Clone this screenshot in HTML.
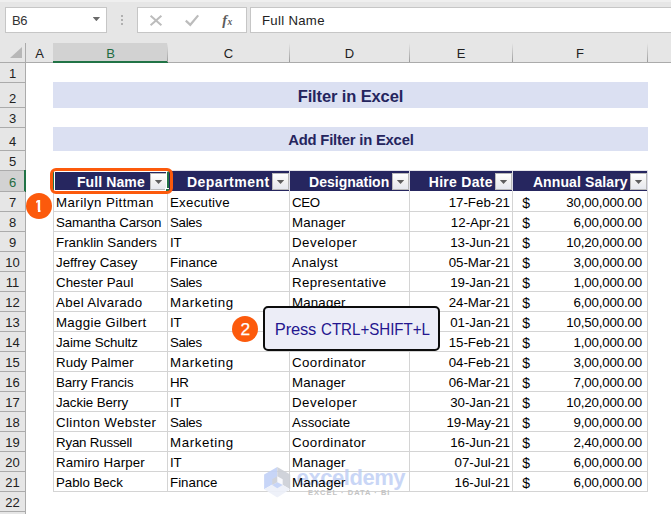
<!DOCTYPE html><html><head><meta charset="utf-8"><title>Filter in Excel</title><style>
*{box-sizing:border-box;margin:0;padding:0}
html,body{width:671px;height:514px;overflow:hidden;background:#fff}
body{position:relative;font-family:"Liberation Sans",sans-serif;color:#000;font-size:13px}
.abs,.abs>*{position:absolute}
div{position:absolute;white-space:nowrap}
.top{left:0;top:0;width:671px;height:43px;background:#e6e6e6}
.box{background:#fff;border:1px solid #c6c6c6}
.ch{top:43px;height:19px;background:#e6e6e6;text-align:center;line-height:22px;font-size:13px;color:#222}
.rh{left:0;width:25px;background:#e6e6e6;text-align:center;font-size:13px;color:#222}
.t{font-size:13.3px;line-height:20px;height:20px;color:#000}
.th{color:#fff;font-weight:700;font-size:14px;line-height:20px;height:20px;top:172.2px}
.fb{width:17px;height:17px;top:173px;border:1px solid #b9b9b9;background:linear-gradient(#fff,#f2f2f2 50%,#e6e8ef);}
.fb:after{content:"";position:absolute;left:3.85px;top:5.9px;width:7.4px;height:4.2px;background:#5e5e5e;clip-path:polygon(0 0,100% 0,50% 100%)}
.hl{height:1px;background:#d4d4d4}
.vl{width:1px;background:#d4d4d4}
.circ{width:26.2px;height:26.2px;border-radius:50%;background:#fc5a0c;color:#fff;text-align:center;font-size:17px;line-height:26px}
</style></head><body>
<div class="top"></div>
<div style="left:0;top:0;width:671px;height:2px;background:#efefef"></div>
<div class="box" style="left:5px;top:7px;width:102px;height:26px"></div>
<div style="left:12px;top:7px;height:26px;line-height:27px;font-size:13px;color:#333;letter-spacing:-0.5px">B6</div>
<div style="left:92.7px;top:17px;width:7.4px;height:4.2px;background:#6a6a6a;clip-path:polygon(0 0,100% 0,50% 100%)"></div>
<div style="left:121px;top:15px;width:2px;height:2px;background:#b0b0b0"></div>
<div style="left:121px;top:19px;width:2px;height:2px;background:#b0b0b0"></div>
<div style="left:121px;top:23px;width:2px;height:2px;background:#b0b0b0"></div>
<div class="box" style="left:137px;top:7px;width:110px;height:26px"></div>
<svg style="position:absolute;left:137px;top:7px" width="110" height="26" viewBox="0 0 110 26"><path d="M13.6 8.8 L24.4 18.2 M24.4 8.8 L13.6 18.2" stroke="#bcbcbc" stroke-width="2" fill="none"/><path d="M48.8 13.6 L53.3 17.8 L61.2 8.4" stroke="#bcbcbc" stroke-width="2.2" fill="none"/><text x="85.3" y="17.6" font-family="Liberation Serif,serif" font-style="italic" font-weight="700" font-size="14.5" fill="#5c5c5c">f</text><text x="90.6" y="18.4" font-family="Liberation Serif,serif" font-style="italic" font-weight="700" font-size="9.5" fill="#5c5c5c">x</text></svg>
<div class="box" style="left:250px;top:7px;width:430px;height:26px"></div>
<div style="left:262px;top:7px;height:26px;line-height:27px;font-size:13.2px;color:#222;letter-spacing:0.3px">Full Name</div>
<div style="left:0;top:43px;width:671px;height:20px;background:#e6e6e6"></div>
<div style="left:0;top:62px;width:671px;height:1px;background:#ababab"></div>
<svg style="position:absolute;left:0;top:43px" width="26" height="20"><path d="M22 4 L22 15 L10 15 Z" fill="#b7b7b7"/></svg>
<div style="left:25px;top:43px;width:1px;height:471px;background:#ababab"></div>
<div class="ch" style="left:26px;width:27px">A</div>
<div style="left:53px;top:43px;width:1px;height:19px;background:linear-gradient(#e6e6e6,#9c9c9c)"></div>
<div class="ch" style="left:53px;width:115px;background:#d2d2d2;color:#1e6b41">B</div>
<div style="left:53px;top:61px;width:115px;height:2px;background:#217346"></div>
<div style="left:167px;top:43px;width:1px;height:19px;background:linear-gradient(#e6e6e6,#9c9c9c)"></div>
<div class="ch" style="left:168px;width:121px">C</div>
<div style="left:289px;top:43px;width:1px;height:19px;background:linear-gradient(#e6e6e6,#9c9c9c)"></div>
<div class="ch" style="left:290px;width:119px">D</div>
<div style="left:409px;top:43px;width:1px;height:19px;background:linear-gradient(#e6e6e6,#9c9c9c)"></div>
<div class="ch" style="left:410px;width:102px">E</div>
<div style="left:512px;top:43px;width:1px;height:19px;background:linear-gradient(#e6e6e6,#9c9c9c)"></div>
<div class="ch" style="left:513px;width:134px">F</div>
<div style="left:647px;top:43px;width:1px;height:19px;background:linear-gradient(#e6e6e6,#9c9c9c)"></div>
<div style="left:0;top:63px;width:25px;height:451px;background:#e6e6e6"></div>
<div class="rh" style="top:63px;height:19px;line-height:21px;background:none">1</div>
<div style="left:0;top:82px;width:25px;height:1px;background:#ababab"></div>
<div class="rh" style="top:88px;height:19px;line-height:21px;background:none">2</div>
<div style="left:0;top:107px;width:25px;height:1px;background:#ababab"></div>
<div class="rh" style="top:108px;height:19px;line-height:21px;background:none">3</div>
<div style="left:0;top:127px;width:25px;height:1px;background:#ababab"></div>
<div class="rh" style="top:131px;height:19px;line-height:21px;background:none">4</div>
<div style="left:0;top:150px;width:25px;height:1px;background:#ababab"></div>
<div class="rh" style="top:151px;height:19px;line-height:21px;background:none">5</div>
<div style="left:0;top:170px;width:25px;height:1px;background:#ababab"></div>
<div style="left:0;top:171px;width:25px;height:20px;background:#d2d2d2"></div>
<div style="left:24px;top:170px;width:2px;height:22px;background:#217346"></div>
<div class="rh" style="top:172px;height:19px;line-height:21px;background:none;color:#1e6b41">6</div>
<div style="left:0;top:191px;width:25px;height:1px;background:#ababab"></div>
<div class="rh" style="top:192px;height:19px;line-height:21px;background:none">7</div>
<div style="left:0;top:211px;width:25px;height:1px;background:#ababab"></div>
<div class="rh" style="top:212px;height:19px;line-height:21px;background:none">8</div>
<div style="left:0;top:231px;width:25px;height:1px;background:#ababab"></div>
<div class="rh" style="top:232px;height:19px;line-height:21px;background:none">9</div>
<div style="left:0;top:251px;width:25px;height:1px;background:#ababab"></div>
<div class="rh" style="top:252px;height:19px;line-height:21px;background:none">10</div>
<div style="left:0;top:271px;width:25px;height:1px;background:#ababab"></div>
<div class="rh" style="top:272px;height:19px;line-height:21px;background:none">11</div>
<div style="left:0;top:291px;width:25px;height:1px;background:#ababab"></div>
<div class="rh" style="top:292px;height:19px;line-height:21px;background:none">12</div>
<div style="left:0;top:311px;width:25px;height:1px;background:#ababab"></div>
<div class="rh" style="top:312px;height:19px;line-height:21px;background:none">13</div>
<div style="left:0;top:331px;width:25px;height:1px;background:#ababab"></div>
<div class="rh" style="top:332px;height:19px;line-height:21px;background:none">14</div>
<div style="left:0;top:351px;width:25px;height:1px;background:#ababab"></div>
<div class="rh" style="top:352px;height:19px;line-height:21px;background:none">15</div>
<div style="left:0;top:371px;width:25px;height:1px;background:#ababab"></div>
<div class="rh" style="top:372px;height:19px;line-height:21px;background:none">16</div>
<div style="left:0;top:391px;width:25px;height:1px;background:#ababab"></div>
<div class="rh" style="top:392px;height:19px;line-height:21px;background:none">17</div>
<div style="left:0;top:411px;width:25px;height:1px;background:#ababab"></div>
<div class="rh" style="top:412px;height:19px;line-height:21px;background:none">18</div>
<div style="left:0;top:431px;width:25px;height:1px;background:#ababab"></div>
<div class="rh" style="top:432px;height:19px;line-height:21px;background:none">19</div>
<div style="left:0;top:451px;width:25px;height:1px;background:#ababab"></div>
<div class="rh" style="top:452px;height:19px;line-height:21px;background:none">20</div>
<div style="left:0;top:471px;width:25px;height:1px;background:#ababab"></div>
<div class="rh" style="top:472px;height:19px;line-height:21px;background:none">21</div>
<div style="left:0;top:491px;width:25px;height:1px;background:#ababab"></div>
<div class="rh" style="top:492px;height:19px;line-height:21px;background:none">22</div>
<div style="left:0;top:511px;width:25px;height:1px;background:#ababab"></div>
<div style="left:53px;top:82px;width:595px;height:26px;background:#dbe0f2"></div>
<div style="left:297.7px;top:82px;height:26px;line-height:29px;font-weight:700;font-size:16.5px;color:#25255e;letter-spacing:-0.121px">Filter in Excel</div>
<div style="left:53px;top:127px;width:595px;height:24px;background:#dbe0f2"></div>
<div style="left:288.3px;top:127px;height:24px;line-height:26px;font-weight:700;font-size:14.8px;color:#25255e;letter-spacing:-0.2px">Add Filter in Excel</div>
<div style="left:53px;width:114px;top:171px;height:20px;background:#26265f"></div>
<div class="th" style="left:76.9px;letter-spacing:0.112px">Full Name</div>
<div class="fb" style="left:150px"></div>
<div style="left:167px;width:122px;top:171px;height:20px;background:#26265f"></div>
<div class="th" style="left:186.9px;letter-spacing:0.5px">Department</div>
<div class="fb" style="left:272px"></div>
<div style="left:289px;width:120px;top:171px;height:20px;background:#26265f"></div>
<div class="th" style="left:309.09999999999997px;letter-spacing:-0.002px">Designation</div>
<div class="fb" style="left:392px"></div>
<div style="left:409px;width:103px;top:171px;height:20px;background:#26265f"></div>
<div class="th" style="left:428.79999999999995px;letter-spacing:0.279px">Hire Date</div>
<div class="fb" style="left:495px"></div>
<div style="left:512px;width:135px;top:171px;height:20px;background:#26265f"></div>
<div class="th" style="left:532.9px;letter-spacing:0.102px">Annual Salary</div>
<div class="fb" style="left:630px"></div>
<div style="left:167px;top:170px;width:1px;height:21px;background:#dcdce6"></div>
<div style="left:289px;top:170px;width:1px;height:21px;background:#dcdce6"></div>
<div style="left:409px;top:170px;width:1px;height:21px;background:#dcdce6"></div>
<div style="left:512px;top:170px;width:1px;height:21px;background:#dcdce6"></div>
<div style="left:647px;top:170px;width:1px;height:21px;background:#dcdce6"></div>
<div style="left:53px;top:170px;width:595px;height:1px;background:#e4e4ea"></div>
<div class="hl" style="left:53px;top:211px;width:595px"></div>
<div class="hl" style="left:53px;top:231px;width:595px"></div>
<div class="hl" style="left:53px;top:251px;width:595px"></div>
<div class="hl" style="left:53px;top:271px;width:595px"></div>
<div class="hl" style="left:53px;top:291px;width:595px"></div>
<div class="hl" style="left:53px;top:311px;width:595px"></div>
<div class="hl" style="left:53px;top:331px;width:595px"></div>
<div class="hl" style="left:53px;top:351px;width:595px"></div>
<div class="hl" style="left:53px;top:371px;width:595px"></div>
<div class="hl" style="left:53px;top:391px;width:595px"></div>
<div class="hl" style="left:53px;top:411px;width:595px"></div>
<div class="hl" style="left:53px;top:431px;width:595px"></div>
<div class="hl" style="left:53px;top:451px;width:595px"></div>
<div class="hl" style="left:53px;top:471px;width:595px"></div>
<div class="hl" style="left:53px;top:491px;width:595px"></div>
<div class="vl" style="left:53px;top:191px;height:301px"></div>
<div class="vl" style="left:167px;top:191px;height:301px"></div>
<div class="vl" style="left:289px;top:191px;height:301px"></div>
<div class="vl" style="left:409px;top:191px;height:301px"></div>
<div class="vl" style="left:512px;top:191px;height:301px"></div>
<div class="vl" style="left:647px;top:191px;height:301px"></div>
<svg style="position:absolute;left:262px;top:464px" width="32" height="36" viewBox="0 0 32 36"><g opacity="0.9"><path d="M15.25 3.1 L2.1 10.6 L2.1 25.2 L15.25 17.8 Z" fill="#c2d1f7"/><path d="M15.25 3.1 L28.2 10.6 L28.2 25.2 L15.25 17.8 Z" fill="#cccfd6"/><path d="M2.1 25.2 L15.25 17.8 L28.2 25.2 L15.25 33.5 Z" fill="#edf0f9"/><path d="M15.25 12.25 L10.25 15.2 L10.25 21 L15.4 18.3 Z" fill="#cccfd6"/><path d="M15.25 12.25 L20.7 15.2 L20.7 21 L15.4 18.3 Z" fill="#f8f9fd"/><path d="M10.25 21 L15.4 18.3 L20.7 21 L15.25 24.3 Z" fill="#c2d1f7"/></g></svg>
<div style="left:296.6px;top:464.6px;font-size:22px;font-weight:700;color:#bccdf5;opacity:.8;letter-spacing:-0.45px;line-height:26px">exceldemy</div>
<div style="left:308px;top:487.6px;font-size:7.5px;color:#c4c4c4;letter-spacing:1.02px;line-height:9px;font-weight:700">EXCEL · DATA · BI</div>
<div class="t" style="left:56px;top:193px;letter-spacing:0.42px;">Marilyn Pittman</div>
<div class="t" style="left:170px;top:193px;letter-spacing:0.243px;">Executive</div>
<div class="t" style="left:292px;top:193px;letter-spacing:-0.3px;">CEO</div>
<div class="t" style="left:410px;width:100px;text-align:right;top:193px">17-Feb-21</div>
<div class="t" style="left:522.2px;top:193px;font-size:14px">$</div>
<div class="t" style="left:513px;width:128.9px;text-align:right;top:193px;letter-spacing:-0.17px">30,00,000.00</div>
<div class="t" style="left:56px;top:213px;letter-spacing:-0.128px;">Samantha Carson</div>
<div class="t" style="left:170px;top:213px;letter-spacing:-0.3px;">Sales</div>
<div class="t" style="left:292px;top:213px;letter-spacing:0.169px;">Manager</div>
<div class="t" style="left:410px;width:100px;text-align:right;top:213px">12-Apr-21</div>
<div class="t" style="left:522.2px;top:213px;font-size:14px">$</div>
<div class="t" style="left:513px;width:128.9px;text-align:right;top:213px;letter-spacing:-0.17px">6,00,000.00</div>
<div class="t" style="left:56px;top:233px;letter-spacing:0.032px;">Franklin Sanders</div>
<div class="t" style="left:170px;top:233px;letter-spacing:-0.3px;">IT</div>
<div class="t" style="left:292px;top:233px;letter-spacing:0.511px;">Developer</div>
<div class="t" style="left:410px;width:100px;text-align:right;top:233px">13-Jun-21</div>
<div class="t" style="left:522.2px;top:233px;font-size:14px">$</div>
<div class="t" style="left:513px;width:128.9px;text-align:right;top:233px;letter-spacing:-0.17px">10,20,000.00</div>
<div class="t" style="left:56px;top:253px;letter-spacing:0.036px;">Jeffrey Casey</div>
<div class="t" style="left:170px;top:253px;letter-spacing:0.015px;">Finance</div>
<div class="t" style="left:292px;top:253px;letter-spacing:0.365px;">Analyst</div>
<div class="t" style="left:410px;width:100px;text-align:right;top:253px">05-Mar-21</div>
<div class="t" style="left:522.2px;top:253px;font-size:14px">$</div>
<div class="t" style="left:513px;width:128.9px;text-align:right;top:253px;letter-spacing:-0.17px">3,00,000.00</div>
<div class="t" style="left:56px;top:273px;letter-spacing:0.048px;">Chester Paul</div>
<div class="t" style="left:170px;top:273px;letter-spacing:-0.3px;">Sales</div>
<div class="t" style="left:292px;top:273px;letter-spacing:0.366px;">Representative</div>
<div class="t" style="left:410px;width:100px;text-align:right;top:273px">19-Jan-21</div>
<div class="t" style="left:522.2px;top:273px;font-size:14px">$</div>
<div class="t" style="left:513px;width:128.9px;text-align:right;top:273px;letter-spacing:-0.17px">1,00,000.00</div>
<div class="t" style="left:56px;top:293px;letter-spacing:0.336px;">Abel Alvarado</div>
<div class="t" style="left:170px;top:293px;letter-spacing:0.589px;">Marketing</div>
<div class="t" style="left:292px;top:293px;letter-spacing:0.169px;">Manager</div>
<div class="t" style="left:410px;width:100px;text-align:right;top:293px">24-Mar-21</div>
<div class="t" style="left:522.2px;top:293px;font-size:14px">$</div>
<div class="t" style="left:513px;width:128.9px;text-align:right;top:293px;letter-spacing:-0.17px">6,00,000.00</div>
<div class="t" style="left:56px;top:313px;letter-spacing:0.287px;">Maggie Gilbert</div>
<div class="t" style="left:170px;top:313px;letter-spacing:-0.3px;">IT</div>
<div class="t" style="left:292px;top:313px;letter-spacing:0.511px;">Developer</div>
<div class="t" style="left:410px;width:100px;text-align:right;top:313px">01-Jan-21</div>
<div class="t" style="left:522.2px;top:313px;font-size:14px">$</div>
<div class="t" style="left:513px;width:128.9px;text-align:right;top:313px;letter-spacing:-0.17px">10,50,000.00</div>
<div class="t" style="left:56px;top:333px;letter-spacing:-0.082px;">Jaime Schultz</div>
<div class="t" style="left:170px;top:333px;letter-spacing:-0.3px;">Sales</div>
<div class="t" style="left:292px;top:333px;letter-spacing:0.068px;">Associate</div>
<div class="t" style="left:410px;width:100px;text-align:right;top:333px">15-Feb-21</div>
<div class="t" style="left:522.2px;top:333px;font-size:14px">$</div>
<div class="t" style="left:513px;width:128.9px;text-align:right;top:333px;letter-spacing:-0.17px">1,00,000.00</div>
<div class="t" style="left:56px;top:353px;letter-spacing:0.074px;">Rudy Palmer</div>
<div class="t" style="left:170px;top:353px;letter-spacing:0.589px;">Marketing</div>
<div class="t" style="left:292px;top:353px;letter-spacing:0.422px;">Coordinator</div>
<div class="t" style="left:410px;width:100px;text-align:right;top:353px">04-Feb-21</div>
<div class="t" style="left:522.2px;top:353px;font-size:14px">$</div>
<div class="t" style="left:513px;width:128.9px;text-align:right;top:353px;letter-spacing:-0.17px">3,00,000.00</div>
<div class="t" style="left:56px;top:373px;letter-spacing:-0.122px;">Barry Francis</div>
<div class="t" style="left:170px;top:373px;letter-spacing:-0.3px;">HR</div>
<div class="t" style="left:292px;top:373px;letter-spacing:0.169px;">Manager</div>
<div class="t" style="left:410px;width:100px;text-align:right;top:373px">06-Mar-21</div>
<div class="t" style="left:522.2px;top:373px;font-size:14px">$</div>
<div class="t" style="left:513px;width:128.9px;text-align:right;top:373px;letter-spacing:-0.17px">7,00,000.00</div>
<div class="t" style="left:56px;top:393px;letter-spacing:-0.087px;">Jackie Berry</div>
<div class="t" style="left:170px;top:393px;letter-spacing:-0.3px;">IT</div>
<div class="t" style="left:292px;top:393px;letter-spacing:0.511px;">Developer</div>
<div class="t" style="left:410px;width:100px;text-align:right;top:393px">30-Jan-21</div>
<div class="t" style="left:522.2px;top:393px;font-size:14px">$</div>
<div class="t" style="left:513px;width:128.9px;text-align:right;top:393px;letter-spacing:-0.17px">10,20,000.00</div>
<div class="t" style="left:56px;top:413px;letter-spacing:0.403px;">Clinton Webster</div>
<div class="t" style="left:170px;top:413px;letter-spacing:-0.3px;">Sales</div>
<div class="t" style="left:292px;top:413px;letter-spacing:0.068px;">Associate</div>
<div class="t" style="left:410px;width:100px;text-align:right;top:413px">19-May-21</div>
<div class="t" style="left:522.2px;top:413px;font-size:14px">$</div>
<div class="t" style="left:513px;width:128.9px;text-align:right;top:413px;letter-spacing:-0.17px">9,00,000.00</div>
<div class="t" style="left:56px;top:433px;letter-spacing:-0.186px;">Ryan Russell</div>
<div class="t" style="left:170px;top:433px;letter-spacing:0.589px;">Marketing</div>
<div class="t" style="left:292px;top:433px;letter-spacing:0.422px;">Coordinator</div>
<div class="t" style="left:410px;width:100px;text-align:right;top:433px">16-Jun-21</div>
<div class="t" style="left:522.2px;top:433px;font-size:14px">$</div>
<div class="t" style="left:513px;width:128.9px;text-align:right;top:433px;letter-spacing:-0.17px">2,40,000.00</div>
<div class="t" style="left:56px;top:453px;letter-spacing:0.133px;">Ramiro Harper</div>
<div class="t" style="left:170px;top:453px;letter-spacing:-0.3px;">IT</div>
<div class="t" style="left:292px;top:453px;letter-spacing:0.169px;">Manager</div>
<div class="t" style="left:410px;width:100px;text-align:right;top:453px">07-Jul-21</div>
<div class="t" style="left:522.2px;top:453px;font-size:14px">$</div>
<div class="t" style="left:513px;width:128.9px;text-align:right;top:453px;letter-spacing:-0.17px">6,00,000.00</div>
<div class="t" style="left:56px;top:473px;letter-spacing:-0.052px;">Pablo Beck</div>
<div class="t" style="left:170px;top:473px;letter-spacing:0.015px;">Finance</div>
<div class="t" style="left:292px;top:473px;letter-spacing:0.169px;">Manager</div>
<div class="t" style="left:410px;width:100px;text-align:right;top:473px">16-Jul-21</div>
<div class="t" style="left:522.2px;top:473px;font-size:14px">$</div>
<div class="t" style="left:513px;width:128.9px;text-align:right;top:473px;letter-spacing:-0.17px">6,00,000.00</div>
<div style="left:53px;top:171px;width:116px;height:20px;border:1px solid #fff;border-left:1px solid #217346;border-right:2px solid #217346;box-shadow:inset 1px 0 0 #fff,inset -1px 0 0 #fff"></div>
<div style="left:165px;top:188px;width:4px;height:4px;background:#217346;border-left:1px solid #fff;border-top:1px solid #fff"></div>
<div style="left:49.7px;top:168px;width:123.2px;height:25.7px;border:3px solid #fc5a0c;border-radius:6px"></div>
<div class="circ" style="left:26px;top:192.6px"></div>
<div style="left:34.1px;top:197.65px;font-size:17px;line-height:17px;font-weight:700;color:#fff;clip-path:polygon(22% 0,67.5% 0,67.5% 100%,40% 100%,40% 72%,22% 72%)">1</div>
<div class="circ" style="left:231.9px;top:315.9px;font-size:17.4px;line-height:27px;text-indent:0.5px;-webkit-text-stroke:0.25px #fff">2</div>
<div style="left:262.5px;top:306.2px;width:177.4px;height:45.2px;border:2px solid #0c0c0c;border-radius:5px;background:#ecedf7"></div>
<div style="left:274.8px;top:306px;height:45.5px;line-height:46px;font-size:16.5px;color:#24168f;letter-spacing:-0.15px">Press</div>
<div style="left:321.0px;top:306px;height:45.5px;line-height:46px;font-size:16.5px;color:#24168f;transform:scaleX(.914);transform-origin:0 50%">CTRL+SHIFT+L</div>
</body></html>
